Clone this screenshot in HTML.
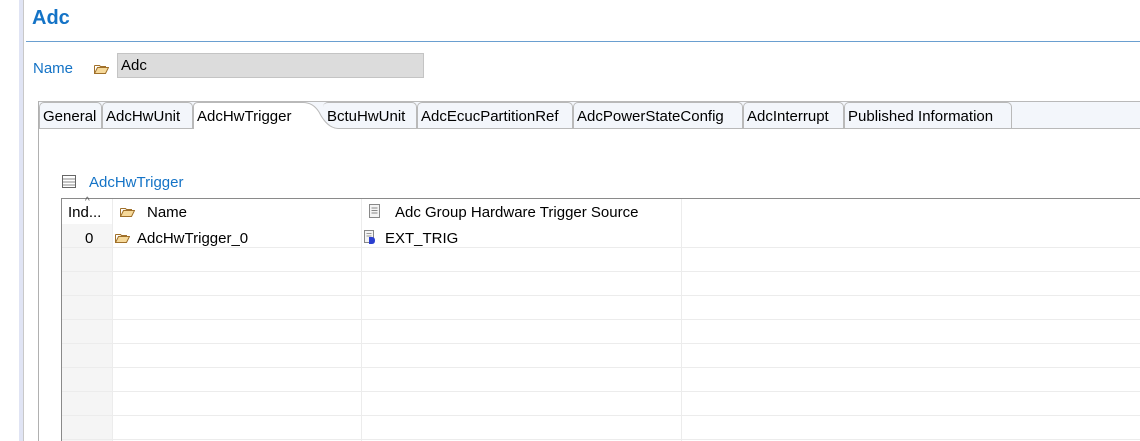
<!DOCTYPE html><html style="overflow:hidden"><head><style>
html,body{height:441px}
body{margin:0;width:1140px;height:441px;overflow:hidden;background:#fff;font-family:"Liberation Sans",sans-serif;font-size:15px;color:#000;position:relative}
.a{position:absolute}
.tab{position:absolute;top:102px;height:26px;border:1px solid #b9b9b9;border-bottom:none;border-radius:5px 5px 0 0;background:#f3f6fb;line-height:28px;padding:0 3px;font-size:15px;box-sizing:border-box}
.hl{position:absolute;left:62px;width:1078px;height:1px;background:#ececec}
.vl{position:absolute;top:199px;width:1px;height:242px;background:#ececec}
</style></head><body>
<div class="a" style="left:19px;top:0;width:4px;height:441px;background:#e0e4f4"></div>
<div class="a" style="left:23px;top:0;width:1px;height:441px;background:#c8c8c8"></div>
<div class="a" style="left:32px;top:7px;font-size:20px;font-weight:bold;color:#1473c6">Adc</div>
<div class="a" style="left:26px;top:41px;width:1114px;height:1px;background:#6a9fd0"></div>
<div class="a" style="left:33px;top:60px;color:#1473c6">Name</div>
<svg class="a" style="left:94px;top:63px" width="15" height="12"><path d="M.5 2.5v8h11l3-6h-11l-3 6M.5 2.5h5l1 1h5v1" fill="#f6d99a" stroke="#a0702a"/></svg>
<div class="a" style="left:117px;top:53px;width:307px;height:25px;background:#dcdcdc;border:1px solid #c4c4c4;box-sizing:border-box;padding-left:3px;line-height:24px">Adc</div>
<div class="a" style="left:38px;top:101px;width:1102px;height:27px;background:#f3f6fb;border-top:1px solid #b9b9b9"></div>
<div class="a" style="left:38px;top:101px;width:1px;height:340px;background:#b0b0b0"></div>
<div class="a" style="left:39px;top:128px;width:1101px;height:1px;background:#b9b9b9"></div>
<div class="tab" style="left:39px;width:63px">General</div>
<div class="tab" style="left:102px;width:91px">AdcHwUnit</div>
<div class="tab" style="left:323px;width:94px;border-left:none;padding-left:4px">BctuHwUnit</div>
<svg class="a" style="left:193px;top:102px" width="145" height="28"><path d="M.5 27V5Q.5 .5 5 .5H110Q120 .5 126 10Q134 26 145 26.5V28H.5z" fill="#fff"/><path d="M.5 27V5Q.5 .5 5 .5H110Q120 .5 126 10Q134 26 145 26.5" fill="none" stroke="#b9b9b9"/></svg>
<div class="a" style="left:197px;top:108px">AdcHwTrigger</div>
<div class="tab" style="left:417px;width:156px">AdcEcucPartitionRef</div>
<div class="tab" style="left:573px;width:170px">AdcPowerStateConfig</div>
<div class="tab" style="left:743px;width:101px">AdcInterrupt</div>
<div class="tab" style="left:844px;width:168px">Published Information</div>
<svg class="a" style="left:62px;top:175px" width="14" height="13"><rect x=".5" y=".5" width="13" height="12" fill="#fff" stroke="#666"/><path d="M1 4h12M1 7h12M1 10h12" stroke="#888"/></svg>
<div class="a" style="left:89px;top:174px;color:#1473c6">AdcHwTrigger</div>
<div class="a" style="left:61px;top:198px;width:1079px;height:243px;border:1px solid #8a8a8a;border-right:none;border-bottom:none;box-sizing:border-box"></div>
<div class="a" style="left:62px;top:223px;width:50px;height:218px;background:#f5f5f5"></div>
<div class="hl" style="top:223px;background:#fff"></div>
<div class="hl" style="top:247px"></div><div class="hl" style="top:271px"></div><div class="hl" style="top:295px"></div><div class="hl" style="top:319px"></div><div class="hl" style="top:343px"></div><div class="hl" style="top:367px"></div><div class="hl" style="top:391px"></div><div class="hl" style="top:415px"></div><div class="hl" style="top:439px"></div>
<div class="vl" style="left:112px"></div><div class="vl" style="left:361px"></div><div class="vl" style="left:681px"></div>
<div class="a" style="left:85px;top:196px;font-size:10px;color:#555">^</div>
<div class="a" style="left:68px;top:204px">Ind...</div>
<svg class="a" style="left:120px;top:206px" width="15" height="12"><path d="M.5 2.5v8h11l3-6h-11l-3 6M.5 2.5h5l1 1h5v1" fill="#f6d99a" stroke="#a0702a"/></svg>
<div class="a" style="left:147px;top:204px">Name</div>
<svg class="a" style="left:369px;top:204px" width="11" height="14"><rect x=".5" y=".5" width="10" height="13" fill="#f4f4f4" stroke="#888"/><path d="M2.5 4h6M2.5 6.5h6M2.5 9h6" stroke="#888"/></svg>
<div class="a" style="left:395px;top:204px">Adc Group Hardware Trigger Source</div>
<div class="a" style="left:85px;top:230px">0</div>
<svg class="a" style="left:115px;top:232px" width="15" height="12"><path d="M.5 2.5v8h11l3-6h-11l-3 6M.5 2.5h5l1 1h5v1" fill="#f6d99a" stroke="#a0702a"/></svg>
<div class="a" style="left:137px;top:230px">AdcHwTrigger_0</div>
<svg class="a" style="left:364px;top:230px" width="12" height="15"><rect x=".5" y=".5" width="9" height="12" fill="#f4f4f4" stroke="#888"/><path d="M2.5 3.5h5M2.5 6h5" stroke="#999"/><path d="M5 7h3q3 0 3 3.5t-3 3.5h-3z" fill="#2a3fd0"/></svg>
<div class="a" style="left:385px;top:230px">EXT_TRIG</div>
</body></html>
